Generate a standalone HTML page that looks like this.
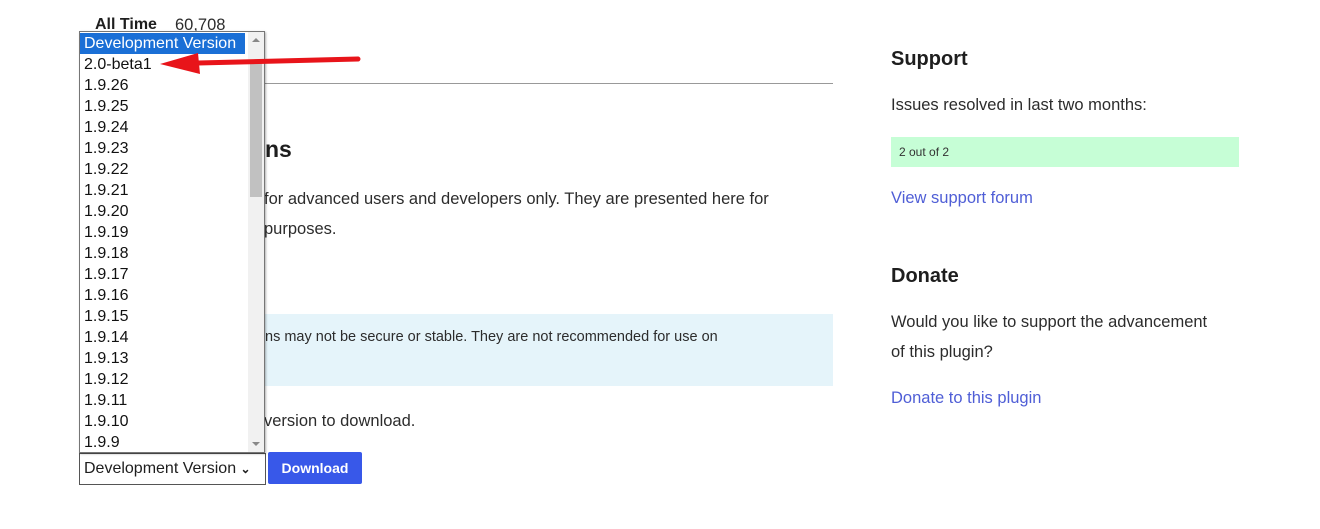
<!DOCTYPE html>
<html><head><meta charset="utf-8"><style>
body{margin:0;width:1320px;height:529px;background:#fff;position:relative;overflow:hidden;font-family:"Liberation Sans",Arial,sans-serif;color:#1e1e1e}
.a{position:absolute;white-space:nowrap}
.t{font-size:16.5px;color:#2c2c2c}
.lnk{color:#4f5ed6;font-size:16.5px}
.list{position:absolute;left:79px;top:31px;width:184px;height:420px;border:1px solid #767676;background:#fff;box-shadow:1px 1px 2px rgba(0,0,0,.3);overflow:hidden}
.list .i{height:21px;line-height:21px;font-size:16px;padding-left:4px;color:#111;width:161px}
.list .sel{background:#1a6fd6;color:#fff;margin-top:1px}
.sb{position:absolute;right:0;top:0;width:16px;height:420px;background:#f1f1f1}
.thumb{position:absolute;left:2px;top:30px;width:12px;height:135px;background:#c1c1c1}
</style></head><body>
<div class="a" style="left:95px;top:16px;font-size:16px;font-weight:bold">All Time</div>
<div class="a t" style="left:175px;top:16px">60,708</div>
<div class="a" style="left:265px;top:83px;width:568px;height:1px;background:#999"></div>
<div class="a" style="left:265px;top:136px;font-size:23px;font-weight:bold;color:#1e1e1e">ns</div>
<div class="a t" style="left:264px;top:190px">for advanced users and developers only. They are presented here for</div>
<div class="a t" style="left:264px;top:220px">purposes.</div>
<div class="a" style="left:240px;top:314px;width:593px;height:72px;background:#e5f4fa"></div>
<div class="a" style="left:265px;top:329px;font-size:14.5px;color:#2c2c2c">ns may not be secure or stable. They are not recommended for use on</div>
<div class="a t" style="left:264px;top:412px">version to download.</div>
<div class="a" style="left:79px;top:453px;width:181px;height:30px;border:1px solid #555;font-size:16px;line-height:30px;padding-left:4px">Development Version <span style="font-size:12px;font-weight:bold">&#8964;</span></div>
<div class="a" style="left:268px;top:452px;width:94px;height:32px;background:#3858e9;border-radius:2px;color:#fff;font-weight:bold;font-size:14px;line-height:32px;text-align:center">Download</div>
<div class="list">
<div class="i sel">Development Version</div>
<div class="i">2.0-beta1</div><div class="i">1.9.26</div><div class="i">1.9.25</div><div class="i">1.9.24</div><div class="i">1.9.23</div><div class="i">1.9.22</div><div class="i">1.9.21</div><div class="i">1.9.20</div><div class="i">1.9.19</div><div class="i">1.9.18</div><div class="i">1.9.17</div><div class="i">1.9.16</div><div class="i">1.9.15</div><div class="i">1.9.14</div><div class="i">1.9.13</div><div class="i">1.9.12</div><div class="i">1.9.11</div><div class="i">1.9.10</div><div class="i">1.9.9</div>
<div class="sb"><div class="thumb"></div>
<div style="position:absolute;left:4px;top:6px;width:0;height:0;border-left:4px solid transparent;border-right:4px solid transparent;border-bottom:4px solid #888"></div>
<div style="position:absolute;left:4px;top:410px;width:0;height:0;border-left:4px solid transparent;border-right:4px solid transparent;border-top:4px solid #888"></div></div>
</div>
<svg class="a" style="left:158px;top:50px" width="205" height="25"><path d="M200 9 L40 13" stroke="#e8141a" stroke-width="5" stroke-linecap="round"/><path d="M2 14 L40 3 L42 24 Z" fill="#e8141a"/></svg>
<div class="a" style="left:891px;top:48px;font-size:20px;font-weight:bold">Support</div>
<div class="a t" style="left:891px;top:96px">Issues resolved in last two months:</div>
<div class="a" style="left:891px;top:137px;width:348px;height:30px;background:#c6fed6;font-size:12px;line-height:30px;padding-left:8px;box-sizing:border-box;color:#333">2 out of 2</div>
<div class="a lnk" style="left:891px;top:189px">View support forum</div>
<div class="a" style="left:891px;top:265px;font-size:20px;font-weight:bold">Donate</div>
<div class="a t" style="left:891px;top:313px">Would you like to support the advancement</div>
<div class="a t" style="left:891px;top:343px">of this plugin?</div>
<div class="a lnk" style="left:891px;top:389px">Donate to this plugin</div>
</body></html>
